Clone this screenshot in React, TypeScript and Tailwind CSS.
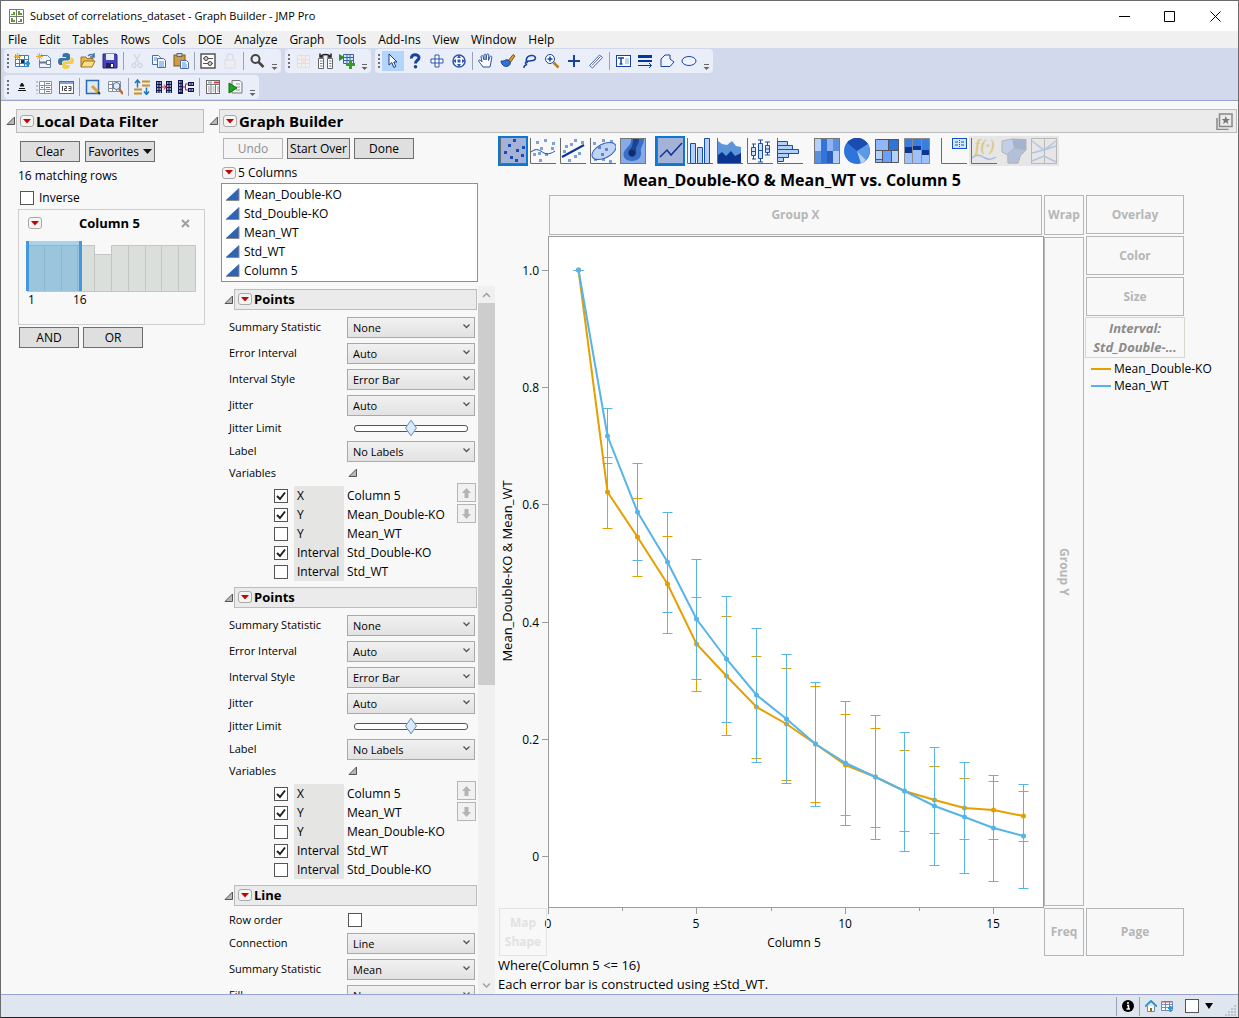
import React from "react";

/* ---------- data ---------- */

const MENUS = ["File", "Edit", "Tables", "Rows", "Cols", "DOE", "Analyze", "Graph", "Tools", "Add-Ins", "View", "Window", "Help"];

const COLUMNS = ["Mean_Double-KO", "Std_Double-KO", "Mean_WT", "Std_WT", "Column 5"];

// [mean, upper, lower] in chart units, one entry per x = 1..16
const DOUBLE_KO = [
  [34, 34, 34], [256, 221, 292], [301, 262, 340], [348, 300, 397],
  [408, 361, 455], [440, 380, 499], [471, 420, 522], [488, 432, 544],
  [508, 450, 566], [529, 478, 579], [541, 492, 591], [555, 514, 595],
  [564, 530, 597], [572, 542, 603], [574, 545, 603], [580, 555, 605],
];
const WT = [
  [34, 34, 34], [200, 172, 227], [276, 227, 324], [326, 276, 376],
  [383, 323, 443], [423, 360, 486], [459, 392, 526], [483, 418, 547],
  [508, 446, 570], [527, 465, 589], [541, 479, 603], [555, 496, 615],
  [570, 511, 629], [581, 526, 637], [592, 539, 645], [600, 548, 652],
];

type Variable = { role: string; name: string; on: boolean };

const VARS_KO: Variable[] = [
  { role: "X", name: "Column 5", on: true },
  { role: "Y", name: "Mean_Double-KO", on: true },
  { role: "Y", name: "Mean_WT", on: false },
  { role: "Interval", name: "Std_Double-KO", on: true },
  { role: "Interval", name: "Std_WT", on: false },
];
const VARS_WT: Variable[] = [
  { role: "X", name: "Column 5", on: true },
  { role: "Y", name: "Mean_WT", on: true },
  { role: "Y", name: "Mean_Double-KO", on: false },
  { role: "Interval", name: "Std_WT", on: true },
  { role: "Interval", name: "Std_Double-KO", on: false },
];

/* ---------- toolbar icons (16x16) ---------- */

const star = <path d="M3.500 0v7M0 3.500h7M1 1l5 5M6 1L1 6" stroke="#efb21e" />;

const ICONS: Record<string, React.ReactNode> = {
  newTable: <><path d="M1.500 2.500h13v11h-13zM1.500 6.500h13M1.500 10.500h13M5.500 2.500v11M10.500 2.500v11" fill="#fff" stroke="#3f7fb5" /><path d="M7 7h3v3H7z" fill="#0c2f6b" /><path d="M11 10.500h5M13.500 8v6" stroke="#1f8fd0" strokeWidth="2" />{star}</>,
  newScript: <><path d="M3.500 2.500h8l3 3v9h-11z" fill="#eef4fb" stroke="#5e87b2" /><path d="M3 9.500h7" stroke="#66788c" strokeWidth="2" /><path d="M10.500 7.500h4v4h-4z" fill="#fff" stroke="#66788c" />{star}</>,
  python: <><path d="M8 0C5 0 4.500 1 4.500 2.500V4H8v1H2.500C1 5 0 6.500 0 8.500S1 12 2.500 12H4v-2c0-1.500 1-2.500 2.500-2.500H10c1 0 2-1 2-2V2.500C12 1 11 0 8 0z" fill="#3772a4" /><path d="M8 16c3 0 3.500-1 3.500-2.500V12H8v-1h5.500C15 11 16 9.500 16 7.500S15 4.500 13.500 4.500h-.8v1.800c0 1.500-1.200 2.200-2.700 2.200H6.500c-1.300 0-2.300 1-2.300 2v3C4.200 15 5 16 8 16z" fill="#f7cd46" /></>,
  open: <><path d="M1 14V4h5l1 1.500h6V8" fill="#e7b54a" stroke="#9a7020" /><path d="M1 14L4 8h11l-3 6z" fill="#fbe08a" stroke="#9a7020" /><path d="M8 3c2-2 4-2 5.500 0M14 0v4h-4" fill="none" stroke="#3d6fb0" strokeWidth="1.500" /></>,
  save: <><path d="M1 1h13l1 1v13H1z" fill="#4646b8" stroke="#26267e" /><path d="M4 1h8v6H4z" fill="#e9eefc" /><path d="M4 10h8v5H4z" fill="#20205e" /><path d="M9 11h2v3H9z" fill="#fff" /></>,
  cut: <path d="M5 1l5 9M11 1l-5 9M5 10.500a2 2 0 1 0 .1 4 2 2 0 0 0-.1-4M11 10.500a2 2 0 1 0 .1 4 2 2 0 0 0-.1-4" fill="none" stroke="#cfd8e8" strokeWidth="1.500" />,
  copy: <><path d="M1.500 2.500h6l2 2v7h-8z" fill="#f4f8ff" stroke="#4c6aa5" /><path d="M6.500 5.500h6l2 2v7h-8z" fill="#f4f8ff" stroke="#4c6aa5" /><path d="M3 5h3M3 7h3M8 9h5M8 11h5M8 13h5" stroke="#5b8fd6" /></>,
  paste: <><rect x="1" y="2" width="11" height="11" fill="#d59a3a" stroke="#7c5a1c" /><rect x="4" y="0.500" width="5" height="3" fill="#ccc" stroke="#666" /><path d="M7.500 7.500h6l2 2v6h-8z" fill="#f4f8ff" stroke="#4c6aa5" /><path d="M9 10h4M9 12h5M9 14h5" stroke="#5b8fd6" /></>,
  prefs: <><rect x="1" y="1" width="14" height="14" fill="#fff" stroke="#555" strokeWidth="1.500" /><path d="M3 5.500h10M3 10.500h10" stroke="#555" /><circle cx="6" cy="5.500" r="2" fill="#ccc" stroke="#444" /><circle cx="10" cy="10.500" r="2" fill="#ccc" stroke="#444" /></>,
  lock: <><rect x="3" y="7" width="10" height="8" fill="#eceef2" stroke="#dadde4" /><path d="M5 7V4a3 3 0 0 1 6 0v3" fill="none" stroke="#dadde4" strokeWidth="1.500" /></>,
  search: <><circle cx="6.500" cy="6" r="4" fill="none" stroke="#444" strokeWidth="2" /><path d="M9.500 9l5 5" stroke="#444" strokeWidth="2.500" /></>,
  gridOff: <><path d="M2.500 2.500h12v12h-12zM2.500 6.500h12M2.500 10.500h12M6.500 2.500v12M10.500 2.500v12" fill="#f1eff0" stroke="#dcdfe8" /><path d="M6 5h5v5H6z" fill="#f1e0dc" /></>,
  compare: <><path d="M1.500 5.500h5v10h-5zM10.500 5.500h5v10h-5z" fill="#fff" stroke="#666" /><path d="M3 8h2.500M3 10.500h2.500M3 13h2.500M12 8h2.500M12 10.500h2.500M12 13h2.500" stroke="#5b82b8" /><path d="M3.500 4C5 0.500 12 0.500 13.500 4M14 .5V4h-3.500M3 .5V4h3.500" fill="none" stroke="#222" strokeWidth="1.500" /></>,
  runAdd: <><path d="M4.500 1.500h10v9h-10zM4.500 4.500h10M4.500 7.500h10M8 1.500v9M11 1.500v9" fill="#d9ecfb" stroke="#3b62a8" /><path d="M0 1l6 3.500L0 8z" fill="#2f8f2f" /><path d="M11.500 7v9M7 11.500h9" stroke="#3a9a2a" strokeWidth="3" /></>,
  arrow: <path d="M4 1v11l2.800-2.500 2 5 2-1-2-4.500H12z" fill="#fff" stroke="#14388c" />,
  help: <><path d="M4.500 5.500c-.5-5 7.500-4.500 7.500-1 0 3-3.500 2.500-3.500 6" fill="none" stroke="#1743a0" strokeWidth="3" /><circle cx="8.500" cy="13.700" r="1.800" fill="#1743a0" /></>,
  crosshair: <path d="M6 2h4v4h4v4h-4v4H6v-4H2V6h4zM6 6h4v4H6z" fill="#fff" stroke="#2a55b0" />,
  target: <><circle cx="8" cy="8" r="6" fill="#fff" stroke="#2a55b0" strokeWidth="1.500" /><path d="M8 2l2 3H6zM8 14l2-3H6zM2 8l3-2v4zM14 8l-3-2v4zM6.500 6.500h3v3h-3z" fill="#2a55b0" /></>,
  hand: <path d="M5 14C3 11 1 9 .5 7.500 1.500 6.500 3 7.500 4 9L3 3.500C3.500 2 5 2.500 5 3.500L6 7V2c.5-1.300 2-1 2 0v5l.8-5.500c.7-1 2-.7 2 .5L10.500 7.500l1.500-4c.8-1 2-.3 1.800.8L12.800 10 12 14z" fill="#fff" stroke="#2a4f9e" />,
  brush: <><path d="M8 8l5-6.500L15 3l-5 7z" fill="#d99a26" stroke="#8a5a10" /><path d="M1 8c3 1 4-2 7-1s3 5 0 6-6 0-7-5z" fill="#2f74d8" stroke="#143d8c" /></>,
  lasso: <path d="M6 9.500C3 8.500 4 3 9 2.500s6 4 2 5-5 0-7 1.500 2 2 0 3-2 1-2 3" fill="none" stroke="#1743a0" strokeWidth="1.500" />,
  zoom: <><circle cx="6" cy="6" r="4.500" fill="#fff" stroke="#1743a0" /><path d="M6 3.500v5M3.500 6h5" stroke="#1743a0" strokeWidth="1.500" /><path d="M9.500 9.500l5 5" stroke="#b87c18" strokeWidth="2.500" /></>,
  plus: <path d="M8 2v12M2 8h12" stroke="#1743a0" strokeWidth="2" />,
  ruler: <path d="M1.500 12.500l10-10.500 3 2.500L4.500 15z M4 12.500L12.500 3.500" fill="#fff" stroke="#4a62a8" />,
  text: <><rect x="1.500" y="2.500" width="14" height="11" fill="#fff" stroke="#1743a0" /><path d="M3 5h6M6 5v6M4.500 11h3" stroke="#1743a0" strokeWidth="1.500" /><path d="M10 6h4M10 8h4M10 10h4" stroke="#8ba6d8" /></>,
  lines: <><path d="M1 3.500h14" stroke="#003a9c" strokeWidth="3" /><path d="M1 8h14" stroke="#003a9c" strokeWidth="2" /><path d="M1 12.500h13M12 10l2.500 2.500L12 15" stroke="#003a9c" /></>,
  polygon: <path d="M2 6l4-4h5v4l4 3-4 4.500H2z" fill="#eef4ff" stroke="#1743a0" />,
  ellipse: <ellipse cx="8" cy="8" rx="7" ry="4.500" fill="#eef4ff" stroke="#1743a0" />,
  up: <path d="M8 4l2 3H6zM5 9.500h6M4 11.500h8" fill="#111" stroke="#111" />,
  rowsTable: <><path d="M3.500 2.500h12v12h-12zM3.500 6.500h12M3.500 10.500h12M8.500 2.500v12" fill="#fff" stroke="#8a94a2" /><path d="M1 2v13" stroke="#8a94a2" strokeDasharray="2 2" /><path d="M10 4.500h4M10 8.500h4M10 12.500h4M5 8.500h2" stroke="#3c8ac8" /></>,
  calc: <><rect x="1.500" y="2.500" width="14" height="12" fill="#fff" stroke="#5a6a80" /><path d="M2 4h13" stroke="#7da3dc" strokeWidth="2" /><path d="M4.500 7v5M6.500 7.500h2v2h-2v2h2.500M10.500 7.500h2.500v4h-2.500M10.500 9.500h2.500" fill="none" stroke="#444" /></>,
  editTable: <><rect x="1.500" y="1.500" width="12" height="13" fill="#d9eafc" stroke="#2d67ad" strokeWidth="1.500" /><path d="M7 7l7 7" stroke="#e0a227" strokeWidth="3" /><path d="M13 13l2 2" stroke="#333" strokeWidth="2" /></>,
  findTable: <><path d="M1.500 2.500h12v10h-12zM1.500 5.500h12M1.500 9.500h12M5.500 2.500v10M9.500 2.500v10" fill="#fff" stroke="#8a8f98" /><circle cx="9.500" cy="7" r="3.500" fill="#d9eefc" stroke="#4b6a8c" /><path d="M12 10l4 5" stroke="#c26a2c" strokeWidth="2.500" /></>,
  sort: <><path d="M8 2.500h8M8 6.500h8M0 10.500h8M0 14.500h8" stroke="#c99024" strokeWidth="2" /><path d="M3.500 8.500V2M1 4l2.500-3L6 4M12.500 8.500V15M10 12.500l2.500 3 2.500-3" fill="none" stroke="#1f77b8" strokeWidth="1.500" /></>,
  joinCols: <><path d="M0 2h6v12H0zM10 2h6v12h-6z" fill="#10164a" /><path d="M1 4h4M1 7h4M1 10h4M1 13h4M11 4h4M11 7h4M11 10h4M11 13h4" stroke="#c5cbe6" strokeWidth="1.500" strokeDasharray="1.500 1" /><path d="M5 8h6M8 5.500L10 8l-2 2.500" stroke="#c0183c" fill="none" /></>,
  splitCols: <><path d="M0 1h5v14H0zM10 3h6v4h-6zM10 9h6v4h-6z" fill="#10164a" /><path d="M1 3h3M1 6h3M1 9h3M1 12h3M11 5h4M11 11h4" stroke="#c5cbe6" strokeWidth="1.500" strokeDasharray="1.500 1" /><path d="M5 8h2.500M7.500 5v6M7.500 5h2.500M7.500 11h2.500" stroke="#c0183c" /></>,
  summary: <><rect x="1.500" y="1.500" width="13" height="13" fill="#fff" stroke="#6a6a6a" /><path d="M2 5.500h12M6 5v9M10.500 5v9" stroke="#7a7a7a" /><path d="M3 8h2M3 10h2M3 12h2M7.500 8h2M7.500 10h2M7.500 12h2M12 8h2M12 10h2M12 12h2" stroke="#999" /><path d="M3 3.500h4" stroke="#aaa" strokeWidth="2" /><path d="M9 3.500h5" stroke="#c44" strokeWidth="2" /></>,
  script: <><path d="M5 1.500h8l2 2V14H5z" fill="#f2f4f8" stroke="#777" /><path d="M9 5h4M9 8h4M9 11h4" stroke="#999" /><path d="M2 4l8 5-8 5z" fill="#1fa51f" stroke="#0b6b0b" /></>,
};

const ToolIcon = ({ name, active }: { name: string; active?: boolean }) => (
  <button
    aria-label={name}
    className={active ? "flex h-5 w-[22px] items-center justify-center bg-[#b3d4fb]" : "flex h-5 w-[22px] items-center justify-center"}
  >
    <svg width="16" height="16" viewBox="0 0 16 16" fill="none">{ICONS[name]}</svg>
  </button>
);

const ToolGroup = ({ items, active }: { items: string[]; active?: string }) => (
  <div className="flex h-6 items-center rounded bg-[#eaeef8]">
    <svg width="7" height="17" viewBox="0 0 7 17">
      {[1, 5, 9, 13].map((y) => <rect key={y} x="3" y={y} width="2" height="2" fill="#6b6f78" />)}
    </svg>
    {items.map((name, i) =>
      name === "|"
        ? <span key={i} className="mx-0.5 h-[18px] w-px bg-[#9aa0b8]" />
        : <ToolIcon key={i} name={name} active={name === active} />
    )}
    <button aria-label="Toolbar options" className="flex w-[13px] self-stretch items-end justify-center pb-0.5">
      <svg width="7" height="7" viewBox="0 0 7 7"><path d="M1 .5h5" stroke="#666" /><path d="M0.500 3h6l-3 3z" fill="#666" /></svg>
    </button>
  </div>
);

/* ---------- small widgets ---------- */

const Disclosure = () => (
  <svg width="10" height="10" viewBox="0 0 10 10" className="shrink-0">
    <path d="M8.500 1v7.500H1z" fill="#b8b8b8" stroke="#555" />
  </svg>
);

const RedTriangle = () => (
  <button aria-label="Options" className="flex h-[12px] w-[14px] shrink-0 items-center justify-center rounded-[3px] border border-[#a8a8a8] bg-[#f4f4f4]">
    <svg width="8" height="5" viewBox="0 0 8 5"><path d="M0 0h8L4 4.500z" fill="#c80000" /></svg>
  </button>
);

const Btn = ({ children, className = "w-[60px]", disabled }: { children: React.ReactNode; className?: string; disabled?: boolean }) => (
  <button
    disabled={disabled}
    className={`flex h-[21px] items-center justify-center whitespace-nowrap border border-[#6e6e6e] bg-[#dfdfdf] disabled:border-[#b4b4b4] disabled:bg-[#f5f5f5] disabled:text-[#8f8f8f] ${className}`}
  >
    {children}
  </button>
);

const Check = ({ id, on, label }: { id: string; on?: boolean; label?: string }) => (
  <span className="grid size-[14px] shrink-0">
    <input id={id} type="checkbox" aria-label={label} defaultChecked={on} className="peer size-[14px] appearance-none border border-[#555] bg-white [grid-area:1/1]" />
    <svg viewBox="0 0 14 14" className="pointer-events-none hidden size-[14px] [grid-area:1/1] peer-checked:block">
      <path d="M3 7l3 3 5-6.500" fill="none" stroke="#222" strokeWidth="2" />
    </svg>
  </span>
);

const SectionHeader = ({ title }: { title: string }) => (
  <div className="flex items-center">
    <Disclosure />
    <h3 className="flex h-[21px] flex-1 items-center gap-0.5 border border-[#bcbcbc] bg-[#ebebeb] pb-px pl-[3px] text-[13px] font-bold">
      <RedTriangle />
      {title}
    </h3>
  </div>
);

const SelectRow = ({ id, label, value }: { id: string; label: string; value: string }) => (
  <div className="flex h-[26px] items-center pl-[5px] pr-[2px]">
    <label htmlFor={id} className="w-[118px] text-[11px]">{label}</label>
    <div className="grid flex-1 items-center">
      <select id={id} className="h-[21px] w-full appearance-none border border-[#a9a9a9] bg-linear-to-b from-[#f1f1f1] to-[#e2e2e2] pt-px pl-[5px] text-[11px] [grid-area:1/1]">
        <option>{value}</option>
      </select>
      <svg width="7" height="5" viewBox="0 0 7 5" className="pointer-events-none mr-[5px] mb-0.5 justify-self-end [grid-area:1/1]">
        <path d="M.5.500l3 3 3-3" fill="none" stroke="#555" strokeWidth="1.300" />
      </svg>
    </div>
  </div>
);

const MoveButton = ({ up }: { up?: boolean }) => (
  <button aria-label={up ? "Move up" : "Move down"} className="flex size-[19px] items-center justify-center border border-[#b5b5b5] bg-[#f1f1f1]">
    <svg width="9" height="10" viewBox="0 0 9 10" className={up ? "" : "rotate-180"}>
      <path d="M4.500 0L9 5H6.500v5h-4V5H0z" fill="#b4b4b4" />
    </svg>
  </button>
);

const PointsSection = ({ id, vars }: { id: string; vars: Variable[] }) => (
  <section className="pb-1.5">
    <SectionHeader title="Points" />
    <div className="pt-1">
      <SelectRow id={`${id}-stat`} label="Summary Statistic" value="None" />
      <SelectRow id={`${id}-err`} label="Error Interval" value="Auto" />
      <SelectRow id={`${id}-style`} label="Interval Style" value="Error Bar" />
      <SelectRow id={`${id}-jitter`} label="Jitter" value="Auto" />
      <div className="flex h-5 items-center pl-[5px]">
        <label htmlFor={`${id}-limit`} className="w-[125px] text-[11px]">Jitter Limit</label>
        <input
          id={`${id}-limit`}
          type="range"
          defaultValue={50}
          className="h-[7px] w-[114px] appearance-none rounded-[3px] border border-[#555] bg-white [&::-webkit-slider-thumb]:size-[12px] [&::-webkit-slider-thumb]:appearance-none [&::-webkit-slider-thumb]:border [&::-webkit-slider-thumb]:border-[#5f8bb8] [&::-webkit-slider-thumb]:bg-[#dbe9f8] [&::-webkit-slider-thumb]:[transform:scaleX(0.7)_rotate(45deg)]"
        />
      </div>
      <SelectRow id={`${id}-label`} label="Label" value="No Labels" />
      <div className="flex h-[18px] items-center pl-[5px]">
        <span className="w-[119px] text-[11px]">Variables</span>
        <Disclosure />
      </div>
    </div>
    <div className="flex pt-1">
      <div className="w-[185px] pl-[50px]">
        {vars.map((v, i) => (
          <div key={i} className="flex h-[19px] items-center whitespace-nowrap">
            <Check id={`${id}-v${i}`} on={v.on} />
            <label htmlFor={`${id}-v${i}`} className="ml-1.5 flex h-full items-center">
              <span className="flex h-full w-[50px] items-center bg-[#e5e5e3] pl-[3px]">{v.role}</span>
              <span className="pl-[3px]">{v.name}</span>
            </label>
          </div>
        ))}
      </div>
      <div className="-mt-[3px] mr-px ml-auto flex flex-col gap-0.5">
        <MoveButton up />
        <MoveButton />
      </div>
    </div>
  </section>
);

/* ---------- graph type palette ---------- */

const axes = <path d="M.5 0v25.500H26" stroke="#6b6b6b" fill="none" />;
const dots = (pts: number[][], fill: string) => pts.map(([x, y]) => <rect key={`${x}-${y}`} x={x} y={y} width="3" height="3" fill={fill} />);

const GRAPH_TYPES: Record<string, React.ReactNode> = {
  Points: <>{axes}{dots([[13, 1], [8, 6], [22, 8], [16, 11], [4, 13], [21, 16], [10, 18], [15, 21]], "#1a4bb0")}</>,
  Smoother: <>{axes}{dots([[6, 3], [14, 1], [10, 9], [21, 9], [3, 15], [8, 14], [15, 15], [22, 4], [9, 21]], "#7f9fd8")}<path d="M1 14c6-5 9-1 13 1s8 0 11-2" stroke="#1a4bb0" fill="none" /></>,
  "Line of Fit": <>{axes}{dots([[14, 1], [5, 7], [10, 5], [18, 14], [21, 3], [3, 12], [14, 17], [8, 21]], "#7f9fd8")}<path d="M2 19L24 7" stroke="#0b3590" strokeWidth="2" /></>,
  Ellipse: <>{axes}{dots([[3, 4], [12, 1], [20, 2], [4, 20], [12, 20], [19, 22]], "#7f9fd8")}<ellipse cx="14" cy="13" rx="13" ry="7" transform="rotate(-27 14 13)" fill="#a9c5f5" fillOpacity=".7" stroke="#2f62c0" />{dots([[8, 8], [15, 10], [11, 15]], "#5f87d0")}</>,
  Contour: <><rect x=".5" y=".5" width="25" height="25" fill="#86abe8" stroke="#777" /><path d="M11 1h13c0 6-4 8-3 13s-3 9-9 9-10-4-8-9 8-7 7-13z" fill="#3b6fc6" /><path d="M13 1h6c0 6-3 6-3 11 1 4-1 7-4 7s-5-4-3-7c3-2 4-6 4-11z" fill="#1c438f" /><circle cx="12" cy="15" r="3" fill="#0e2a68" /></>,
  Line: <>{axes}<path d="M3 19l7-7 4 5L25 5" stroke="#0b3590" strokeWidth="1.500" fill="none" /></>,
  Bar: <>{axes}<path d="M3.500 5.500h5v20h-5zM10.500 9.500h5v16h-5zM17.500.5h5v25h-5z" fill="#b3d0fa" stroke="#1a4bb0" /></>,
  Area: <>{axes}<path d="M1 3l4 3 5 1 5-4 4 5 5 1v16H1z" fill="#5b95dc" /><path d="M1 17l4-3 4 4 5-5 4 5 6-3v10H1z" fill="#0b3590" /></>,
  "Box Plot": <>{axes}<path d="M6.500 6v15M13.500 2v22M20.500 4v13M5 6h4M5 21h4M11 2h5M11 24h5M18 4h5M18 17h5" stroke="#1a4bb0" /><path d="M4.500 9.500h4v8h-4zM11.500 5.500h4v15h-4zM18.500 7.500h4v7h-4zM4 13.500h5M11 12.500h5M18 11h5" fill="#cfe1fc" stroke="#1a4bb0" /></>,
  Histogram: <>{axes}<path d="M.5 3.500h10v4H.5zM.5 7.500h15v4H.5zM.5 11.500h21v4H.5zM.5 15.500h11v4H.5zM.5 19.500h6v4H.5z" fill="#b3d0fa" stroke="#1a4bb0" /></>,
  Heatmap: <><rect width="26" height="26" fill="#8fb3f0" /><path d="M1 1h6v12H1zM19 13h6v12h-6z" fill="#b3d0fa" /><path d="M7 1h6v12H7zM7 13h6v12H7z" fill="#3474d8" /><path d="M19 1h6v12h-6zM1 13h6v12H1z" fill="#5b8fe0" /><path d="M13 13h6v12h-6z" fill="#2a5fc0" /><rect x=".5" y=".5" width="25" height="25" fill="none" stroke="#777" /></>,
  Pie: <><circle cx="13" cy="13" r="13" fill="#2f74d8" /><path d="M13 13L3 4.500A13 13 0 0 1 24 6z" fill="#1a4bb0" /><path d="M13 13L24 6a13 13 0 0 1-2 16z" fill="#5b9ae8" /><path d="M13 13l9 9a13 13 0 0 1-5 3.500z" fill="#b3d0fa" /></>,
  Treemap: <><rect x="1" y="1" width="24" height="24" fill="#8fb8f8" /><path d="M14 1h11v11H14z" fill="#2f74d8" /><path d="M1 12h7v9H1zM17 12h8v13h-8z" fill="#b3d0fa" /><path d="M8 12h9v13H8z" fill="#6b9fff" /><path d="M1.500 1.500h23v23h-23zM14.500 1v11M1 12.500h24M8.500 12v13M17.500 12v13M1 21.500h7" fill="none" stroke="#555" /></>,
  Mosaic: <><rect width="26" height="26" fill="#9fc0f8" /><path d="M1 1h24v8H1z" fill="#3a7fe0" /><path d="M1 9h7v6H1zM9 8h8v4H9zM18 12h7v5h-7z" fill="#0b3590" /><path d="M18 9h7v3h-7z" fill="#3a7fe0" /><path d="M.5.500h25v25H.5zM8.500 0v26M17.500 0v26" fill="none" stroke="#8c8c8c" /></>,
  Caption: <>{axes}<rect x="11.500" y=".5" width="14" height="10" fill="#d6e6ff" stroke="#1250c0" /><path d="M14 4h3M20 4h3M14 7h3M20 7h3M18.500 2v1M18.500 4v1M18.500 6v1M18.500 8v1" stroke="#1250c0" /></>,
  Formula: <>{axes}<path d="M1 20c5-5 9-2 13 0s8 1 11-1" stroke="#a9bbdf" strokeWidth="1.500" fill="none" /><text x="4" y="13" fontSize="16" fontStyle="italic" fontWeight="bold" fill="#dcc98a" fontFamily="Liberation Serif, serif">f(·)</text></>,
  "Map Shapes": <><path d="M1 3l10-2 14 .5V12l-6 6-2 7H7v-8l-6-3z" fill="#c3cfe6" stroke="#b4b4b4" /><path d="M11 1h14v11l-12-2z" fill="#a3b3d0" /><path d="M13 10l12 2-6 6-2 7H7v-9z" fill="#b2c0dc" stroke="#b4b4b4" /></>,
  Parallel: <><rect x=".5" y=".5" width="25" height="25" fill="none" stroke="#b8b8b8" /><path d="M13.500 0v26" stroke="#b8b8b8" /><path d="M1 3l12 9 12-9M1 15l12-3 12-4M1 23l12-5 12 6" stroke="#b4c3e0" strokeWidth="1.500" fill="none" /></>,
};

const PALETTE = [
  ["Points", "Smoother", "Line of Fit", "Ellipse", "Contour"],
  ["Line", "Bar", "Area", "Box Plot", "Histogram"],
  ["Heatmap", "Pie", "Treemap", "Mosaic"],
  ["Caption", "Formula", "Map Shapes", "Parallel"],
];

const Palette = () => (
  <div className="flex gap-[7px]">
    {PALETTE.map((group, g) => (
      <div key={g} className="flex">
        {group.map((name) => {
          const on = name === "Points" || name === "Line";
          const off = name === "Formula" || name === "Map Shapes" || name === "Parallel";
          return (
            <button
              key={name}
              title={name}
              disabled={off}
              className={`flex size-[30px] items-center justify-center disabled:bg-[#e6e6e6] ${on ? "border-2 border-[#0a78d4] bg-[#a3b2d6]" : ""}`}
            >
              <svg width="26" height="26" viewBox="0 0 26 26" className="shrink-0">{GRAPH_TYPES[name]}</svg>
            </button>
          );
        })}
      </div>
    ))}
  </div>
);

/* ---------- chart ---------- */

const px = (i: number) => 50.5 + Math.round(29.69 * (i + 1));

const Series = ({ data, color }: { data: number[][]; color: string }) => (
  <>
    <polyline points={data.map((d, i) => `${px(i)},${d[0]}`).join(" ")} fill="none" stroke={color} strokeWidth="2" />
    {data.map((d, i) => <circle key={i} cx={px(i)} cy={d[0]} r="2.500" fill={color} />)}
  </>
);

const ErrorBars = ({ data, color }: { data: number[][]; color: string }) => (
  <path
    d={data.map((d, i) => `M${px(i) - 5} ${d[1] + 0.5}h10M${px(i) - 5} ${d[2] + 0.5}h10M${px(i)} ${d[1]}V${d[2]}`).join("")}
    stroke={color}
    fill="none"
  />
);

const Chart = () => (
  <svg viewBox="0 0 546 720" className="h-full w-full [grid-area:1/1]" fontSize="12">
    <rect x="50.500" y=".5" width="495" height="671" fill="#fff" stroke="#9c9c9c" />
    {["1.0", "0.8", "0.6", "0.4", "0.2", "0"].map((t, i) => {
      const y = [34, 151, 268, 386, 503, 620][i];
      return (
        <g key={t}>
          <path d={`M44 ${y + 0.5}h6`} stroke="#9c9c9c" />
          <text x="41" y={y + 5} textAnchor="end">{t}</text>
        </g>
      );
    })}
    {["0", "5", "10", "15"].map((t, i) => {
      const x = [50, 198, 347, 495][i];
      return (
        <g key={t}>
          <path d={`M${x + 0.5} 672v6`} stroke="#9c9c9c" />
          <text x={x} y="692" textAnchor="middle">{t}</text>
        </g>
      );
    })}
    <path d="M124.500 672v3M273.500 672v3M421.500 672v3" stroke="#9c9c9c" />
    <text x="296" y="711" textAnchor="middle">Column 5</text>
    <text transform="translate(14 335) rotate(-90)" textAnchor="middle" fontSize="13">Mean_Double-KO &amp; Mean_WT</text>
    <ErrorBars data={DOUBLE_KO} color="#e69f00" />
    <Series data={DOUBLE_KO} color="#e69f00" />
    <ErrorBars data={WT} color="#56b4e9" />
    <Series data={WT} color="#56b4e9" />
  </svg>
);

const ZONE_TONES = {
  empty: "border-[#b6b6b6] text-[#b6b6b6]",
  faint: "border-[#e2e2e2] text-[#e2e2e2]",
  filled: "border-[#d5d8cb] text-[#8a8a8a] text-[13px] italic",
};

const Zone = ({ children, className = "", tone = "empty" }: { children: React.ReactNode; className?: string; tone?: keyof typeof ZONE_TONES }) => (
  <div className={`flex items-center justify-center border text-center font-bold ${ZONE_TONES[tone]} ${className}`}>{children}</div>
);

/* ---------- panels ---------- */

const LocalDataFilter = () => (
  <aside className="w-[198px] shrink-0">
    <div className="flex items-center">
      <Disclosure />
      <h2 className="flex h-6 flex-1 items-center gap-0.5 border border-[#bcbcbc] bg-[#ebebeb] pl-[3px] text-[15px] font-bold">
        <RedTriangle />
        Local Data Filter
      </h2>
    </div>
    <div className="pl-3">
      <div className="mt-2 flex gap-[5px] pl-0.5">
        <Btn>Clear</Btn>
        <Btn className="w-[70px] gap-1">
          Favorites
          <svg width="9" height="5" viewBox="0 0 9 5"><path d="M0 0h9L4.500 5z" fill="#111" /></svg>
        </Btn>
      </div>
      <p className="mt-1 h-[19px] leading-[19px]">16 matching rows</p>
      <div className="mt-[3px] flex h-[19px] items-center gap-[5px] pl-0.5">
        <Check id="inverse" />
        <label htmlFor="inverse">Inverse</label>
      </div>
      <div className="mt-0.5 h-[116px] w-[187px] border border-[#cfcfcf] px-[7px]">
        <div className="flex h-[27px] items-center justify-between pr-1 pb-px pl-0.5">
          <RedTriangle />
          <h3 className="text-[13px] font-bold">Column 5</h3>
          <button aria-label="Remove filter" className="flex size-4 items-center justify-center">
            <svg width="9" height="9" viewBox="0 0 9 9"><path d="M1 1l7 7M8 1L1 8" stroke="#a0a0a0" strokeWidth="2" /></svg>
          </button>
        </div>
        <svg width="171" height="55" viewBox="0 0 171 55" className="block">
          <path d="M1.500 8.500h67v9h17v-9h84v46H1.500z" fill="#dadfdb" stroke="#c2c7c3" />
          <path d="M18.500 8v46M35.500 8v46M51.500 8v46M68.500 8v46M85.500 17v37M102.500 8v46M119.500 8v46M135.500 8v46M152.500 8v46" stroke="#c2c7c3" />
          <path d="M0 4h56v50H0z" fill="#4ea3e0" fillOpacity=".45" />
          <path d="M1.500 4v50M54.500 4v50" stroke="#4598dc" strokeWidth="3" />
        </svg>
        <div className="flex gap-[38px] pl-0.5 leading-4"><span>1</span><span>16</span></div>
      </div>
      <div className="mt-0.5 flex gap-1 pl-px">
        <Btn>AND</Btn>
        <Btn>OR</Btn>
      </div>
    </div>
  </aside>
);

const ControlPanel = () => (
  <div className="flex w-[275px] shrink-0 flex-col">
    <div className="flex gap-1 pt-[5px] pl-0.5">
      <Btn disabled>Undo</Btn>
      <Btn className="w-[63px]">Start Over</Btn>
      <Btn>Done</Btn>
    </div>
    <div className="mt-1 flex h-[19px] items-center gap-0.5 pl-px">
      <RedTriangle />
      5 Columns
    </div>
    <ul className="mt-px h-[99px] w-[257px] shrink-0 border border-[#8f8f8f] bg-white pt-px pl-1">
      {COLUMNS.map((c) => (
        <li key={c} className="flex h-[19px] items-center gap-1">
          <svg width="14" height="13" viewBox="0 0 14 13"><path d="M13 0v12H0z" fill="#2d64b4" /><path d="M13 .5V12.500H0" fill="none" stroke="#8c8c8c" /></svg>
          {c}
        </li>
      ))}
    </ul>
    <div className="mt-1 flex min-h-0 flex-1">
      <div className="w-[257px] overflow-hidden pt-[3px] pr-px pl-[3px]">
        <PointsSection id="p1" vars={VARS_KO} />
        <PointsSection id="p2" vars={VARS_WT} />
        <section>
          <SectionHeader title="Line" />
          <div className="pt-1">
            <div className="flex h-5 items-center pl-[5px]">
              <label htmlFor="row-order" className="w-[119px] text-[11px]">Row order</label>
              <Check id="row-order" />
            </div>
            <SelectRow id="conn" label="Connection" value="Line" />
            <SelectRow id="line-stat" label="Summary Statistic" value="Mean" />
            <SelectRow id="fill" label="Fill" value="None" />
          </div>
        </section>
      </div>
      <div className="flex w-[17px] flex-col items-center bg-[#f0f0f0]">
        <svg width="17" height="17" viewBox="0 0 17 17" className="shrink-0"><path d="M5 11l3.500-3.500L12 11" fill="none" stroke="#a0a0a0" strokeWidth="1.500" /></svg>
        <div className="h-[382px] w-full bg-[#cdcdcd]" />
        <svg width="17" height="17" viewBox="0 0 17 17" className="mt-auto shrink-0"><path d="M5 6.500L8.500 10 12 6.500" fill="none" stroke="#a0a0a0" strokeWidth="1.500" /></svg>
      </div>
    </div>
  </div>
);

const GraphArea = () => (
  <div className="flex min-w-0 flex-1 flex-col pt-[3px] pl-0.5">
    <Palette />
    <div className="flex min-h-0 flex-1">
      <div className="flex min-w-0 flex-1 flex-col">
        <h2 className="h-[29px] pl-[42px] text-center text-[16px] leading-[29px] font-bold">Mean_Double-KO &amp; Mean_WT vs. Column 5</h2>
        <Zone className="mr-0.5 ml-[51px] h-10 shrink-0">Group X</Zone>
        <div className="mt-px grid min-h-0 flex-1 grid-rows-[minmax(0,1fr)]">
          <Chart />
          <Zone tone="faint" className="ml-px h-12 w-12 self-end leading-[19px] [grid-area:1/1]">Map Shape</Zone>
        </div>
      </div>
      <div className="flex w-10 flex-col pt-[29px]">
        <Zone className="h-10 shrink-0">Wrap</Zone>
        <Zone className="mt-0.5 flex-1 [writing-mode:vertical-rl]">Group Y</Zone>
        <Zone className="mt-0.5 h-12 shrink-0">Freq</Zone>
      </div>
      <div className="mr-[54px] ml-0.5 flex w-[98px] flex-col pt-[29px]">
        <div className="flex flex-col gap-0.5">
          <Zone className="h-[39px]">Overlay</Zone>
          <Zone className="h-[39px]">Color</Zone>
          <Zone className="h-[39px]">Size</Zone>
        </div>
        <Zone tone="filled" className="-mx-px mt-px h-[41px] leading-[19px]">Interval:<br />Std_Double-...</Zone>
        <ul className="mt-0.5 ml-[5px] whitespace-nowrap">
          <li className="flex h-[17px] items-center gap-[3px]"><span className="h-0.5 w-5 shrink-0 bg-[#e69f00]" />Mean_Double-KO</li>
          <li className="flex h-[17px] items-center gap-[3px]"><span className="h-0.5 w-5 shrink-0 bg-[#56b4e9]" />Mean_WT</li>
        </ul>
        <Zone className="mt-auto h-12 shrink-0">Page</Zone>
      </div>
    </div>
    <div className="text-[13px] leading-[19px]">
      <p>Where(Column 5 &lt;= 16)</p>
      <p>Each error bar is constructed using ±Std_WT.</p>
    </div>
  </div>
);

export default function App() {
  return (
    <div className="flex h-screen flex-col overflow-hidden border border-[#6b6b6b] border-b-[#222] bg-[#f8f8f8] font-['Open_Sans','Noto_Sans',sans-serif] text-[12px] leading-[16px] text-black">
      <header>
        <div className="flex h-[30px] items-center bg-white pl-2">
          <svg width="15" height="15" viewBox="0 0 15 15">
            <path d="M.5.500h14v14H.5zM7.500 0v15M0 7.500h15" fill="#fff" stroke="#777" />
            <path d="M2 5h2V3h2v3H2zM9 2h2v2h2v2H9zM2 9h2v2h2v2H2zM9 12h2v-2h2v3H9z" fill="#5f9b32" />
          </svg>
          <h1 className="ml-1.5 text-[11px]">Subset of correlations_dataset - Graph Builder - JMP Pro</h1>
          <div className="ml-auto flex">
            <button aria-label="Minimize" className="flex h-[30px] w-[46px] items-center justify-center"><svg width="11" height="11"><path d="M0 5.500h11" stroke="#000" /></svg></button>
            <button aria-label="Maximize" className="flex h-[30px] w-[45px] items-center justify-center"><svg width="11" height="11"><path d="M.5.500h10v10H.5z" fill="none" stroke="#000" /></svg></button>
            <button aria-label="Close" className="flex h-[30px] w-[46px] items-center justify-center"><svg width="11" height="11"><path d="M.5.500l10 10M10.500.5l-10 10" stroke="#000" /></svg></button>
          </div>
        </div>
        <nav className="flex h-[17px] items-center gap-3 bg-[#f0f0f0] pl-[7px]">
          {MENUS.map((m) => <button key={m}>{m}</button>)}
        </nav>
        <div className="flex h-[53px] flex-col gap-0.5 border-b border-[#9aa3cf] bg-[#d3d9ec] pt-px pl-[3px]">
          <div className="flex gap-1">
            <ToolGroup items={["newTable", "newScript", "python", "open", "save", "|", "cut", "copy", "paste", "|", "prefs", "lock", "|", "search"]} />
            <ToolGroup items={["gridOff", "compare", "runAdd"]} />
            <ToolGroup active="arrow" items={["arrow", "help", "crosshair", "target", "|", "hand", "brush", "lasso", "zoom", "plus", "ruler", "|", "text", "lines", "polygon", "ellipse"]} />
          </div>
          <div className="flex">
            <ToolGroup items={["up", "rowsTable", "calc", "|", "editTable", "findTable", "|", "sort", "joinCols", "splitCols", "|", "summary", "script"]} />
          </div>
        </div>
      </header>

      <main className="flex min-h-0 flex-1 gap-[5px] pt-2 pl-[5px]">
        <LocalDataFilter />
        <section className="flex min-w-0 flex-1 flex-col">
          <div className="flex items-center pr-px">
            <Disclosure />
            <h2 className="flex h-6 flex-1 items-center gap-0.5 border border-[#bcbcbc] bg-[#ebebeb] px-[3px] text-[15px] font-bold">
              <RedTriangle />
              Graph Builder
              <button aria-label="Presets" className="ml-auto">
                <svg width="17" height="17" viewBox="0 0 17 17">
                  <path d="M3.500 1h12.500v12.500H3.500z" fill="none" stroke="#888" strokeWidth="1.500" />
                  <path d="M1 5v11.500h11.500" fill="none" stroke="#888" strokeWidth="1.500" />
                  <path d="M9.800 3l1.200 3h3l-2.400 2 .9 3-2.700-1.800L7 11l1-3-2.400-2h3z" fill="#777" />
                </svg>
              </button>
            </h2>
          </div>
          <div className="flex min-h-0 flex-1 pl-3">
            <ControlPanel />
            <GraphArea />
          </div>
        </section>
      </main>

      <footer className="flex h-[23px] shrink-0 items-center border-t border-[#9aa3cf] bg-[#e0e6f0]">
        <div className="ml-auto flex h-full items-center">
          <span className="h-[19px] w-px bg-[#9aa0b8]" />
          <svg width="12" height="12" viewBox="0 0 12 12" className="mx-[5px]"><circle cx="6" cy="6" r="6" fill="#000" /><path d="M6 2v2M5 5.500h1.500V9M4.500 9h3.500" stroke="#fff" strokeWidth="1.500" fill="none" /></svg>
          <span className="h-[19px] w-px bg-[#9aa0b8]" />
          <svg width="12" height="12" viewBox="0 0 12 12" className="ml-[5px]"><path d="M2.500 6v5.500h7V6" fill="#fff" stroke="#6f8fa8" /><path d="M0 6.500L6 1l6 5.500" fill="none" stroke="#2f95c8" strokeWidth="2" /><path d="M5 8h2v3.500H5z" fill="#9a6a20" /></svg>
          <svg width="12" height="12" viewBox="0 0 12 12" className="ml-1"><path d="M.5 1.500h11v9H.5zM0 4.500h12M0 7.500h12M4.500 1v9M8.500 1v9" fill="#fff" stroke="#6d8cc0" /><path d="M1 2h10" stroke="#c05a5a" /><path d="M7 8h5M9.500 6v6" stroke="#2f95c8" strokeWidth="2" /></svg>
          <input type="checkbox" aria-label="Arrange" className="ml-3 size-[14px] appearance-none border border-[#555] bg-white" />
          <button aria-label="Window list" className="ml-1.5"><svg width="8" height="6" viewBox="0 0 8 6"><path d="M0 0h8L4 6z" fill="#000" /></svg></button>
          <svg width="12" height="12" viewBox="0 0 12 12" className="mr-px ml-3 self-end">
            {[[9, 0], [6, 3], [9, 3], [3, 6], [6, 6], [9, 6], [0, 9], [3, 9], [6, 9], [9, 9]].map(([x, y]) => <rect key={`${x}-${y}`} x={x} y={y} width="2" height="2" fill="#bcc1cc" />)}
          </svg>
        </div>
      </footer>
    </div>
  );
}
